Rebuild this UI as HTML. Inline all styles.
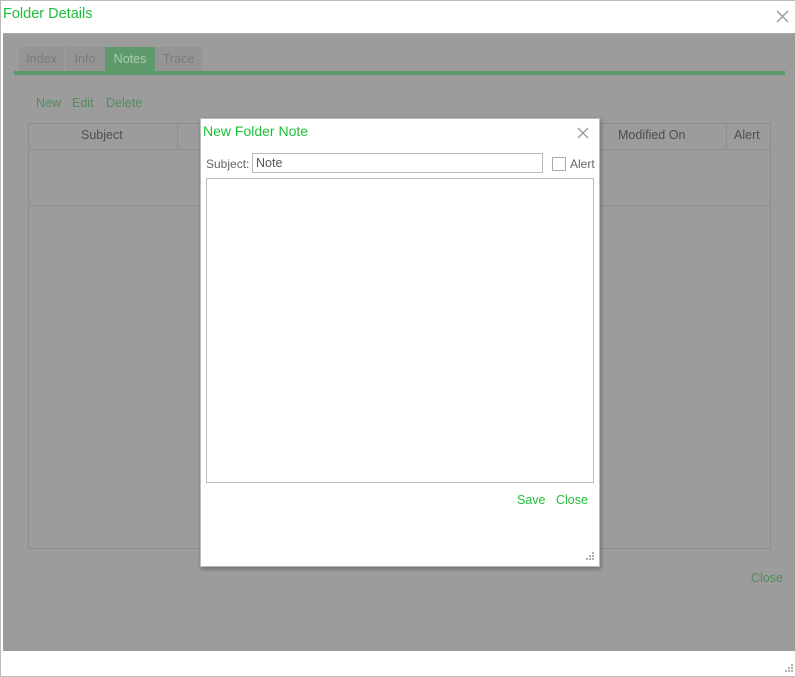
<!DOCTYPE html>
<html><head><style>
*{margin:0;padding:0;box-sizing:border-box}
body{width:795px;height:677px;background:#fff;font-family:"Liberation Sans",sans-serif;position:relative;overflow:hidden}
.a{position:absolute}
.g{color:#1fbf39}
.dg{color:#4f8f5c}
.t{font-size:12.5px;color:#666}
</style></head><body>
<div class="a" style="left:0;top:0;width:795px;height:677px;border:1px solid #bbb;border-right:none"></div>
<div class="a g" style="left:3px;top:6px;font-size:14.5px">Folder Details</div>
<svg class="a" style="left:776px;top:10px" width="13" height="13"><path d="M1 1L12 12M12 1L1 12" stroke="#999" stroke-width="1.4"/></svg>
<div class="a" style="left:3px;top:33px;width:792px;height:618px;background:#9c9c9c;border-top:1px solid #a8a8a8"></div>
<div class="a" style="left:19px;top:47px;width:45px;height:24px;background:#959595;color:#7a7a7a;font-size:12.5px;text-align:center;line-height:24px">Index</div>
<div class="a" style="left:65px;top:47px;width:40px;height:24px;background:#959595;color:#7a7a7a;font-size:12.5px;text-align:center;line-height:24px">Info</div>
<div class="a" style="left:105px;top:47px;width:50px;height:24px;background:#5e9a6c;color:#a8cdb0;font-size:12.5px;text-align:center;line-height:24px">Notes</div>
<div class="a" style="left:155px;top:47px;width:47px;height:24px;background:#959595;color:#7a7a7a;font-size:12.5px;text-align:center;line-height:24px">Trace</div>
<div class="a" style="left:14px;top:71px;width:771px;height:4px;background:#5b9a68"></div>
<div class="a dg" style="left:36px;top:96px;font-size:12.5px">New</div>
<div class="a dg" style="left:72px;top:96px;font-size:12.5px">Edit</div>
<div class="a dg" style="left:106px;top:96px;font-size:12.5px">Delete</div>
<div class="a" style="left:28px;top:123px;width:743px;height:426px;border:1px solid #8e8e8e"></div>
<div class="a" style="left:28px;top:149px;width:743px;height:1px;background:#8e8e8e"></div>
<div class="a" style="left:28px;top:205px;width:743px;height:1px;background:#8e8e8e"></div>
<div class="a" style="left:177px;top:123px;width:1px;height:26px;background:#8e8e8e"></div>
<div class="a" style="left:726px;top:123px;width:1px;height:26px;background:#8e8e8e"></div>
<div class="a" style="left:81px;top:128px;font-size:12.5px;color:#4e4e4e">Subject</div>
<div class="a" style="left:618px;top:128px;font-size:12.5px;color:#4e4e4e">Modified On</div>
<div class="a" style="left:734px;top:128px;font-size:12.5px;color:#4e4e4e">Alert</div>
<div class="a dg" style="left:751px;top:571px;font-size:12.5px">Close</div>
<div class="a" style="left:200px;top:118px;width:400px;height:449px;background:#fff;border:1px solid #bbb;box-shadow:1px 2px 4px rgba(0,0,0,.3)"></div>
<div class="a g" style="left:203px;top:123px;font-size:14px">New Folder Note</div>
<svg class="a" style="left:577px;top:127px" width="12" height="12"><path d="M1 1L11 11M11 1L1 11" stroke="#999" stroke-width="1.3"/></svg>
<div class="a t" style="left:206px;top:157px;font-size:12px">Subject:</div>
<div class="a" style="left:252px;top:153px;width:291px;height:20px;border:1px solid #bbb;font-size:12.5px;color:#555;padding:2px 3px">Note</div>
<div class="a" style="left:552px;top:157px;width:14px;height:14px;border:1px solid #aaa"></div>
<div class="a t" style="left:570px;top:157px;font-size:12px">Alert</div>
<div class="a" style="left:206px;top:178px;width:388px;height:305px;border:1px solid #bbb"></div>
<div class="a g" style="left:517px;top:493px;font-size:12.5px">Save</div>
<div class="a g" style="left:556px;top:493px;font-size:12.5px">Close</div>
<svg class="a" style="left:584px;top:551px" width="12" height="12" fill="#999"><circle cx="9" cy="2" r="1"/><circle cx="6" cy="5" r="1"/><circle cx="9" cy="5" r="1"/><circle cx="3" cy="8" r="1"/><circle cx="6" cy="8" r="1"/><circle cx="9" cy="8" r="1"/></svg>
<svg class="a" style="left:783px;top:663px" width="12" height="12" fill="#999"><circle cx="9" cy="2" r="1"/><circle cx="6" cy="5" r="1"/><circle cx="9" cy="5" r="1"/><circle cx="3" cy="8" r="1"/><circle cx="6" cy="8" r="1"/><circle cx="9" cy="8" r="1"/></svg>
</body></html>
